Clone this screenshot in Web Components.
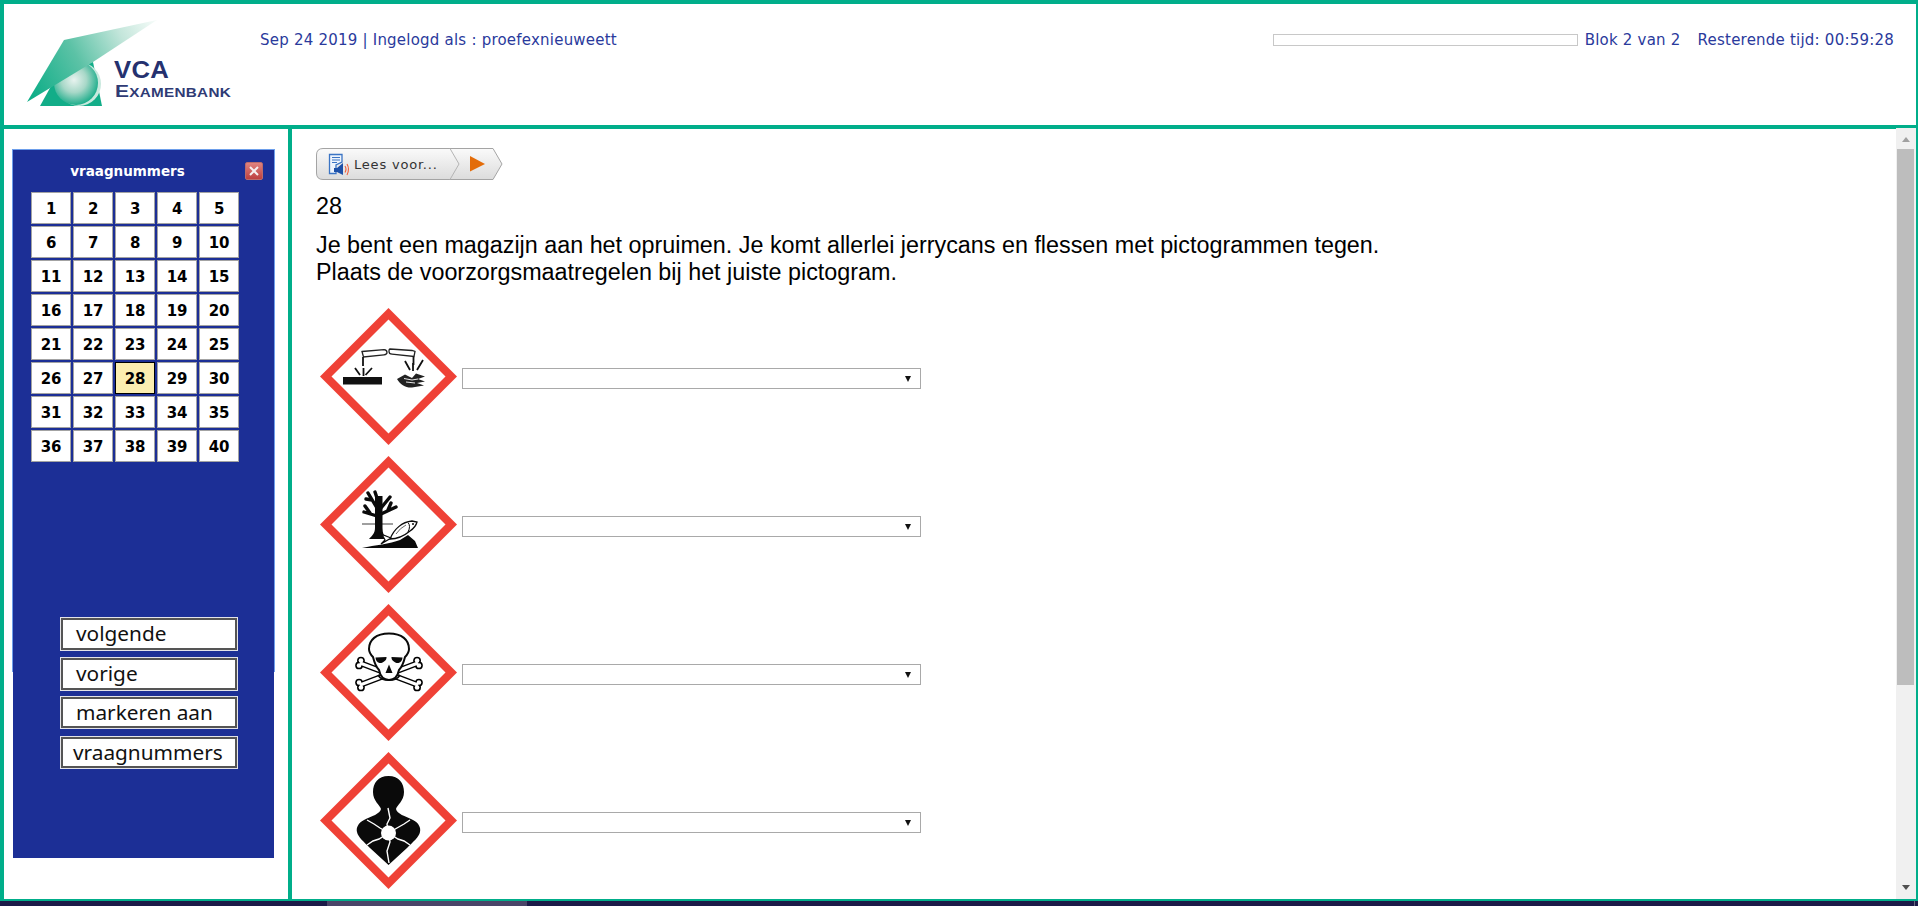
<!DOCTYPE html>
<html lang="nl"><head><meta charset="utf-8"><title>VCA Examenbank</title>
<style>
html,body{margin:0;padding:0;height:906px;overflow:hidden;background:#fff}
</style></head>
<body>
<vca-app>
  <vca-header slot="header"></vca-header>
  <vca-sidebar slot="side">
    <q-grid current="28" count="40"></q-grid>
    <nav-button slot="buttons" h="32" mt="0" pad="16">volgende</nav-button>
    <nav-button slot="buttons" h="32" mt="8" pad="16">vorige</nav-button>
    <nav-button slot="buttons" h="31" mt="7" pad="16">markeren aan</nav-button>
    <nav-button slot="buttons" h="31" mt="9" pad="13">vraagnummers</nav-button>
  </vca-sidebar>
  <q-content slot="main">
    <read-speaker></read-speaker>
    <q-number>28</q-number>
    <q-text>Je bent een magazijn aan het opruimen. Je komt allerlei jerrycans en flessen met pictogrammen tegen.<br>Plaats de voorzorgsmaatregelen bij het juiste pictogram.</q-text>
    <q-row type="corrosive"></q-row>
    <q-row type="environment"></q-row>
    <q-row type="skull"></q-row>
    <q-row type="health"></q-row>
  </q-content>
  <fake-scrollbar slot="scroll"></fake-scrollbar>
</vca-app>
<script>
const GREEN='#00ae8a';
function el(name,html,cls){
  customElements.define(name,cls||class extends HTMLElement{
    constructor(){super();this.attachShadow({mode:'open'}).innerHTML=html;}
  });
}
el('vca-app',`<style>
:host{display:flex;flex-direction:column;width:1918px;height:906px;box-sizing:border-box;overflow:hidden;background:#1c1a48}
.frame{height:901px;box-sizing:border-box;border:solid ${GREEN};border-width:4px 2px 2px 4px;display:flex;flex-direction:column;background:#fff;flex:none}
.head{height:121px;border-bottom:4px solid ${GREEN};flex:none}
.body{flex:1;display:flex;min-height:0}
.side{width:284px;border-right:4px solid ${GREEN};flex:none}
.main{flex:1;min-width:0;overflow:hidden}
.scroll{width:20px;flex:none;margin-top:-1px}
.task{height:5px;display:flex;flex:none;background:#1c1a48}
.task i{display:block;margin-left:327px;width:200px;background:#4a4468}
.task b{display:block;margin-left:1387px;width:1px;background:#6a6a80}
</style>
<div class="frame"><div class="head"><slot name="header"></slot></div>
<div class="body"><div class="side"><slot name="side"></slot></div><div class="main"><slot name="main"></slot></div><div class="scroll"><slot name="scroll"></slot></div></div></div>
<div class="task"><i></i><b></b></div>`);

el('vca-logo',`<style>:host{display:block;width:256px;height:121px;flex:none}svg{display:block}</style>
<svg width="256" height="121" viewBox="4 4 256 121">
<defs>
<linearGradient id="b" x1="30" y1="90" x2="155" y2="22" gradientUnits="userSpaceOnUse"><stop offset="0" stop-color="#0fae88"/><stop offset=".4" stop-color="#5cc2a6"/><stop offset=".75" stop-color="#c4e6db"/><stop offset="1" stop-color="#f4fbf8"/></linearGradient>
<radialGradient id="s" cx="74" cy="80" r="25" gradientUnits="userSpaceOnUse"><stop offset="0" stop-color="#e8f3ef"/><stop offset=".5" stop-color="#a8d8c8"/><stop offset="1" stop-color="#1fae8c"/></radialGradient>
</defs>
<polygon points="40,106 102,106 93,62 60,70" fill="#12ad88"/>
<circle cx="79" cy="84" r="22" fill="#c9e9de"/>
<circle cx="76" cy="83" r="22" fill="url(#s)"/>
<polygon points="27,102 64,40 157,20 93,62" fill="url(#b)"/>
<text x="114" y="78" font-family="Liberation Sans" font-weight="700" font-size="23.5" fill="#25316f" textLength="55" lengthAdjust="spacingAndGlyphs">VCA</text>
<text x="115" y="97" font-family="Liberation Sans" font-weight="700" font-size="16.5" fill="#2f3b75" style="font-variant:small-caps" textLength="116" lengthAdjust="spacingAndGlyphs">Examenbank</text>
</svg>`);

el('vca-header',`<style>
:host{display:flex;height:121px;font:15px "DejaVu Sans",sans-serif;letter-spacing:.22px;color:#2a3a9c}
.l{padding-top:27px;white-space:nowrap}
.r{margin-left:auto;display:flex;align-items:flex-start;padding:27px 22px 0 0;white-space:nowrap}
.bar{width:305px;height:12px;box-sizing:border-box;border:1px solid #c8c8c8;margin:3px 7px 0 0}
.t{margin-left:17px}
</style><vca-logo></vca-logo><div class="l">Sep 24 2019 | Ingelogd als : proefexnieuweett</div>
<div class="r"><div class="bar"></div><span>Blok 2 van 2</span><span class="t">Resterende tijd: 00:59:28</span></div>`);

el('vca-sidebar',`<style>
:host{display:block;padding:20px 0 0 9px}
.p{position:relative;width:261px;height:708px;margin-top:1px;background:#1c2f96;font-family:"DejaVu Sans",sans-serif}
.p::before{content:"";position:absolute;left:-1px;right:-1px;top:-1px;height:522px;border:solid #6d9eeb;border-width:1px 1px 0;pointer-events:none}
.ti{display:flex;align-items:center;height:42px;position:relative}
.ti span{display:block;width:229px;text-align:center;color:#fff;font-weight:700;font-size:13.5px}
.x{width:18px;height:18px;margin-left:3px;border-radius:2px;background:linear-gradient(#e0837f,#bd4040);border:1px solid #b96a6a;box-sizing:border-box;display:flex;align-items:center;justify-content:center}
.g{margin-left:18px}
.b{display:flex;flex-direction:column;margin:156px 0 0 48px}
</style><div class="p"><div class="ti"><span>vraagnummers</span><div class="x"><svg width="12" height="12" viewBox="0 0 12 12"><path d="M2 2L10 10M10 2L2 10" stroke="#f5f0f0" stroke-width="2"/></svg></div></div>
<div class="g"><slot></slot></div><div class="b"><slot name="buttons"></slot></div></div>`);

customElements.define('q-cell',class extends HTMLElement{
  constructor(){super();this.attachShadow({mode:'open'}).innerHTML=`<style>
:host{display:flex;align-items:center;justify-content:center;box-sizing:border-box;width:40px;height:32px;padding-top:1px;background:#fff;border:1px solid #a3a3a3;font:700 15px "DejaVu Sans",sans-serif;letter-spacing:-.3px;color:#000}
:host([on]){background:#fbeeb0;border-color:#000}
</style><slot></slot>`;}
});
customElements.define('q-grid',class extends HTMLElement{
  constructor(){super();const s=this.attachShadow({mode:'open'});
    s.innerHTML=`<style>:host{display:grid;grid-template-columns:repeat(5,40px);grid-auto-rows:32px;gap:2px}</style><slot></slot>`;}
  connectedCallback(){
    const n=+this.getAttribute('count'),c=this.getAttribute('current');
    for(let i=1;i<=n;i++){const d=document.createElement('q-cell');d.textContent=i;if(String(i)===c)d.setAttribute('on','');this.appendChild(d);}
  }
});
customElements.define('nav-button',class extends HTMLElement{
  constructor(){super();this.attachShadow({mode:'open'}).innerHTML=`<style>
:host{display:flex;align-items:center;box-sizing:border-box;width:176px;padding-bottom:2px;background:#fff;border:2px solid #555;outline:1px solid #e4e4e8;outline-offset:0;font:20.8px "Noto Sans",sans-serif;color:#111;white-space:nowrap}
</style><slot></slot>`;}
  connectedCallback(){
    this.style.height=this.getAttribute('h')+'px';
    this.style.marginTop=this.getAttribute('mt')+'px';
    this.style.paddingLeft=(this.getAttribute('pad')-3)+'px';
  }
});
el('q-content',`<style>:host{display:block;padding:19px 0 0 24px;height:770px;box-sizing:border-box;overflow:hidden}</style><slot></slot>`);
el('read-speaker',`<style>
:host{display:flex;align-items:center;position:relative;width:186px;height:32px;font:13px "DejaVu Sans",sans-serif;color:#333}
svg{position:absolute;left:0;top:0}
span{position:relative;margin-left:38px;letter-spacing:.8px;white-space:nowrap}
</style><svg width="187" height="32" viewBox="0 0 187 32"><defs><linearGradient id="g" x1="0" y1="0" x2="0" y2="1"><stop offset="0" stop-color="#fafafa"/><stop offset="1" stop-color="#dcdcdc"/></linearGradient></defs>
<path d="M7 .5H177L186 16L177 31.5H7Q.5 31.5 .5 25V7Q.5 .5 7 .5Z" fill="url(#g)" stroke="#a4a4a4"/>
<path d="M134 .5L143 16L134 31.5" fill="none" stroke="#b4b4b4"/>
<path d="M13.5 6.500H26V14L20 17V25.500H13.500Z" fill="#eef4fc" stroke="#3b74c4" stroke-width="1.300"/>
<path d="M16 9.500H24M16 12H24M16 14.500H21" stroke="#3b74c4"/>
<path d="M18 20H21L27 15V27L21 24H18Z" fill="#1d50a8"/>
<path d="M29 18Q31 21 29 24.500M31 16Q34 21 31 27" fill="none" stroke="#f0603c" stroke-width="1.100"/>
<polygon points="154,8 169,16 154,23.500" fill="#e36c09"/>
</svg><span>Lees voor...</span>`);
el('q-number',`<style>:host{display:block;font:23.33px/26px "Liberation Sans",sans-serif;color:#000;margin-top:13px}</style><slot></slot>`);
el('q-text',`<style>:host{display:block;font:23.33px/27px "Liberation Sans",sans-serif;color:#000;margin:13px 0 22px;white-space:nowrap}</style><slot></slot>`);

function bone(a,b,c,d){
  const dx=c-a,dy=d-b,l=Math.hypot(dx,dy),nx=-dy/l*2.6,ny=dx/l*2.6;
  const ends=[[a+nx,b+ny],[a-nx,b-ny],[c+nx,d+ny],[c-nx,d-ny]];
  const k=(r,f)=>ends.map(e=>`<circle cx="${e[0]}" cy="${e[1]}" r="${r}" fill="${f}"/>`).join('');
  return `<line x1="${a}" y1="${b}" x2="${c}" y2="${d}" stroke="#000" stroke-width="6"/>${k(3.9,'#000')}${k(2.3,'#fff')}<line x1="${a}" y1="${b}" x2="${c}" y2="${d}" stroke="#fff" stroke-width="3"/>`;
}
const PICTO={
corrosive:`<g fill="#fff" stroke="#222" stroke-width="1.300"><path d="M42 43.500L64 41.700Q67 42 67 44.500Q67 46.500 64 46.800L43.500 49Z"/><path d="M70 41L92 42.500L95 43.500L94 48.500L72 46.200Q69 46 69 43.500Q69 41 70 41Z"/></g>
<g stroke="#111" stroke-width="1.800" fill="none"><path d="M43 49V58M35 60L40 67M43.500 60V68M52 60L45.500 67M93.500 48.500V57M85 53L90 62M93 55V63M103 52L97 62"/></g>
<rect x="23" y="69" width="39" height="7.500" fill="#111"/>
<path d="M77 71L85 66.500L92 70L96 65.500L105 68.500L98 71L105 73.500L97 75L104 77.500L92 79.500C86 80 80 76.500 77 71Z" fill="#222"/><path d="M84 70.500L92 72L98 71M86 74L95 75" stroke="#fff" stroke-width=".9" fill="none"/>`,
environment:`<path d="M42 68H73" stroke="#888" stroke-width="1.600"/>
<path d="M55 40L62.500 40L62.500 72C62.500 77 64 80 66 83H49C52 80 55 77 55 72Z" fill="#0a0a0a"/>
<g stroke="#0a0a0a" stroke-width="3.400" fill="none" stroke-linecap="round"><path d="M57 60L44 56M50 57L45 50M57 52L48 37M52 44L46 43M58 45L55 36M61 58L76 51M61 52L70 41M68 54L71 47"/></g>
<path d="M42 92C55 89 70 88 80 84L88 79L95 85L98 92Z" fill="#0a0a0a"/>
<path d="M70 83C74 73 82 66 92 65L97 66C96 70 93 73 90 75C84 80 77 83 70 83Z" fill="#fff" stroke="#0a0a0a" stroke-width="1.300"/>
<path d="M71 82L62 78.500L65 84L61 88Z" fill="#fff" stroke="#0a0a0a" stroke-width="1.200"/>
<path d="M88 66.500Q91 70 88 76" stroke="#0a0a0a" stroke-width="1" fill="none"/><circle cx="93" cy="68" r="1" fill="#0a0a0a"/>
<path d="M76 78Q80 72 86 69" stroke="#555" stroke-width=".9" fill="none"/>`,
skull:bone(40,59,98,81)+bone(98,59,40,81)+`<path d="M69 29.500C56 29.500 49 36 49 45C49 49 51 51 53 53C54 57 55 62 59 66C60 71 63 76 69 76C75 76 78 71 79 66C83 62 84 57 85 53C87 51 89 49 89 45C89 36 82 29.500 69 29.500Z" fill="#fff" stroke="#0a0a0a" stroke-width="2"/>
<path d="M55.500 53.500L66.500 53C67 56 63 59.500 59.500 59C57 58.500 55.500 56 55.500 53.500ZM82.500 53.500L71.500 53C71 56 75 59.500 78.500 59C81 58.500 82.500 56 82.500 53.500ZM69 60.500L65.500 69H72.500Z" fill="#0a0a0a"/>
<path d="M58 71C62 78 76 78 80 71" fill="none" stroke="#0a0a0a" stroke-width="1.600"/>`,
health:`<path d="M68.500 24C58 24 53 31 53 40C53 49 60 53 61 57C60 62 52 64 44 68C38 71 36 76 37 80C38 85 44 90 50 96L68.500 113L87 96C93 90 99 85 100 80C101 76 99 71 93 68C85 64 77 62 76 57C77 53 84 49 84 40C84 31 79 24 68.500 24Z" fill="#0a0a0a"/>
<circle cx="68.500" cy="81" r="7.500" fill="#fff"/>
<g fill="none" stroke="#fff" stroke-width="1.400"><path d="M68.500 81L67 72L70 66L68 56"/><path d="M68.500 81L60 76L54 72L47 68"/><path d="M68.500 81L77 76L84 72L90 68"/><path d="M68.500 81L59 87L53 89L47 93"/><path d="M68.500 81L78 87L84 89L90 93"/><path d="M68.500 81L70 90L67 99L69 111"/></g>`
};
customElements.define('ghs-pictogram',class extends HTMLElement{
  constructor(){super();this.attachShadow({mode:'open'});}
  connectedCallback(){
    this.shadowRoot.innerHTML=`<style>:host{display:block;width:137px;height:137px;flex:none}svg{display:block;filter:blur(.35px)}</style>
<svg width="137" height="137" viewBox="0 0 137 137"><path fill="#ef4136" fill-rule="evenodd" d="M68.500 0L137 68.500L68.500 137L0 68.500ZM68.500 11.500L11.500 68.500L68.500 125.500L125.500 68.500Z"/>${PICTO[this.getAttribute('type')]||''}</svg>`;
  }
});
el('fake-select',`<style>
:host{display:flex;align-items:center;justify-content:flex-end;box-sizing:border-box;width:459px;height:21px;background:#fff;border:1px solid #a9a9a9;padding-right:9px}
i{display:block;width:0;height:0;border:solid transparent;border-width:6px 3.500px 0;border-top-color:#111}
</style><i></i>`);
customElements.define('q-row',class extends HTMLElement{
  constructor(){super();this.attachShadow({mode:'open'});}
  connectedCallback(){
    this.shadowRoot.innerHTML=`<style>:host{display:flex;align-items:center;height:137px;margin:0 0 11px 4px}fake-select{margin:4px 0 0 5px}</style>
<ghs-pictogram type="${this.getAttribute('type')}"></ghs-pictogram><fake-select></fake-select>`;
  }
});
el('fake-scrollbar',`<style>
:host{display:flex;flex-direction:column;align-items:center;width:20px;height:771px;background:#f0f0f0;box-sizing:border-box}
.u,.d{width:0;height:0;border:solid transparent;flex:none}
.u{border-width:0 4.500px 5px;border-bottom-color:#a0a0a0;margin-top:9px}
.t{width:17px;height:536px;background:#bdbdbd;margin-top:7px;flex:none;margin-left:-1px}
.d{border-width:5px 4.500px 0;border-top-color:#505050;margin-top:auto;margin-bottom:9px}
</style><div class="u"></div><div class="t"></div><div class="d"></div>`);
</script>
</body></html>
